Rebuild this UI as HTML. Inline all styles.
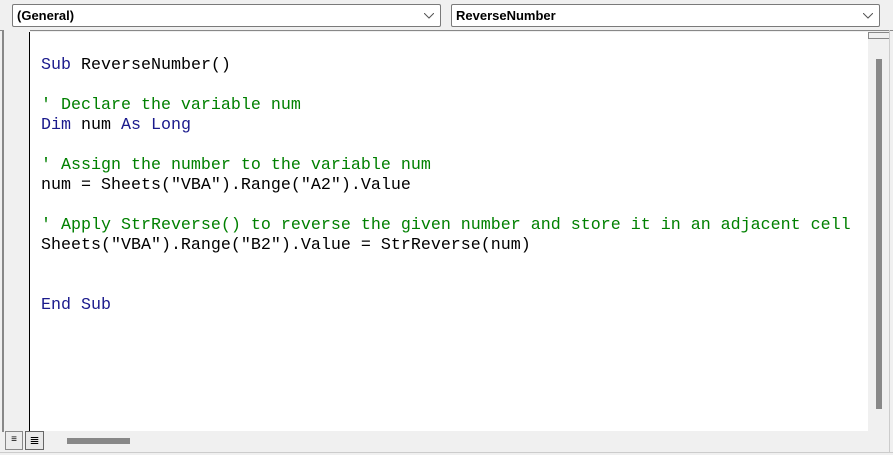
<!DOCTYPE html>
<html><head><style>
body{margin:0;width:893px;height:455px;background:#f0f0f0;position:relative;overflow:hidden;font-family:"Liberation Sans",sans-serif}
.dd{position:absolute;top:4px;height:23px;background:#fff;border:1px solid #7a7a7a;border-radius:2px;box-sizing:border-box;font-weight:bold;font-size:13px;line-height:21px;padding-left:4px;color:#000}
.dd svg{position:absolute;right:6px;top:8px}
#code{position:absolute;left:30px;top:32px;width:838px;height:399px;background:#fff}
#gut{position:absolute;left:2px;top:30px;width:26px;height:402px;background:#f0f0f0;border-left:2px solid #888}
#line{position:absolute;left:29px;top:32px;width:1px;height:399px;background:#000}
pre{position:absolute;left:41px;top:56px;margin:0;font-family:"Liberation Mono",monospace;font-size:16.67px;line-height:20px;color:#000}
.k{color:#1a1a8c}.c{color:#008000}
</style></head><body>
<div class="dd" style="left:12px;width:429px">(General)<svg width="10" height="6"><path d="M0 0L5 5L10 0" stroke="#555" fill="none"/></svg></div>
<div class="dd" style="left:451px;width:429px">ReverseNumber<svg width="10" height="6"><path d="M0 0L5 5L10 0" stroke="#555" fill="none"/></svg></div>
<div style="position:absolute;left:0;top:30px;width:893px;height:1px;background:#888"></div>
<div id="gut"></div><div id="line"></div>
<div id="code"></div>
<div style="position:absolute;left:868px;top:32px;width:20px;height:5px;border:1px solid #888;background:#f0f0f0"></div>
<div style="position:absolute;left:876px;top:59px;width:6px;height:350px;background:#888"></div>
<div style="position:absolute;left:67px;top:438px;width:63px;height:6px;background:#888"></div>
<div style="position:absolute;left:5px;top:431px;width:18px;height:19px;border:1px solid #888;box-sizing:border-box;background:#ececec;font-size:10px;text-align:center;line-height:16px">≡</div>
<div style="position:absolute;left:25px;top:431px;width:19px;height:19px;border:1px solid #666;box-sizing:border-box;background:#e8e8e8;font-size:12px;text-align:center;line-height:16px">≣</div>
<div style="position:absolute;left:0;top:452px;width:893px;height:1px;background:#ccc"></div>
<div style="position:absolute;left:889px;top:30px;width:1px;height:423px;background:#ccc"></div>
<pre><span class="k">Sub</span> ReverseNumber()

<span class="c">' Declare the variable num</span>
<span class="k">Dim</span> num <span class="k">As Long</span>

<span class="c">' Assign the number to the variable num</span>
num = Sheets("VBA").Range("A2").Value

<span class="c">' Apply StrReverse() to reverse the given number and store it in an adjacent cell</span>
Sheets("VBA").Range("B2").Value = StrReverse(num)


<span class="k">End Sub</span></pre>
</body></html>
